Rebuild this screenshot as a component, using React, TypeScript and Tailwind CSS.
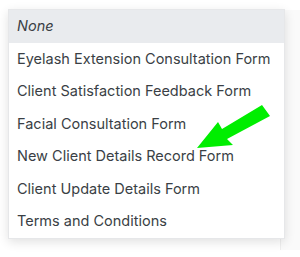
import React from 'react';

const options = [
  'Eyelash Extension Consultation Form',
  'Client Satisfaction Feedback Form',
  'Facial Consultation Form',
  'New Client Details Record Form',
  'Client Update Details Form',
  'Terms and Conditions',
];

const App: React.FC = () => {
  return (
    <div className="relative w-[300px] h-[257px] bg-white overflow-hidden font-['Inter',sans-serif]">
      {/* faint page behind the menu */}
      <div className="absolute top-[10px] right-0 w-[20px] h-[240px] bg-[#fafafa] border-l border-[#eeeeee]" />

      <div className="relative pl-[8px] pt-[9px]">
        <div className="w-[277px] bg-white border border-[#e6e7e9] shadow-[0_3px_10px_rgba(0,0,0,0.12)]">
          <div className="h-[32.5px] flex items-center px-[8px] bg-[#e9ebee] text-[14.5px] italic text-[#3a3f45]">
            None
          </div>
          {options.map((o) => (
            <div key={o} className="h-[32.5px] flex items-center px-[8px] text-[14.5px] text-[#3a3f45] whitespace-nowrap">
              {o}
            </div>
          ))}
        </div>
      </div>

      {/* green arrow */}
      <svg className="absolute left-0 top-0" width="300" height="257" viewBox="0 0 300 257">
        <polygon
          points="262,105 270,116 227,139 233,145 197,148 218,122 222,129"
          fill="#00ee00"
        />
      </svg>
    </div>
  );
};

export default App;
